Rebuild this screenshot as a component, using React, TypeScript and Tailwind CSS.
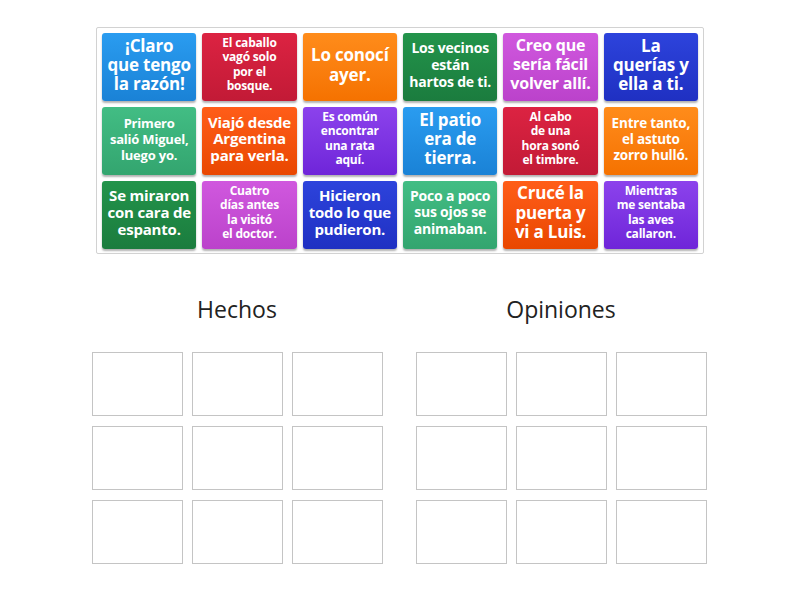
const palette = {
  blue: "bg-gradient-to-b from-[#2a9cf0] to-[#1a82d6]",
  crimson: "bg-gradient-to-b from-[#dc2342] to-[#c21a36]",
  orange: "bg-gradient-to-b from-[#ff8c1a] to-[#f57200]",
  green: "bg-gradient-to-b from-[#23944b] to-[#1b7c3e]",
  orchid: "bg-gradient-to-b from-[#d058de] to-[#bb42cb]",
  navy: "bg-gradient-to-b from-[#2d43dc] to-[#1f30c2]",
  mint: "bg-gradient-to-b from-[#42bd84] to-[#33a56f]",
  red: "bg-gradient-to-b from-[#ff5d18] to-[#e94700]",
  purple: "bg-gradient-to-b from-[#8c42ec] to-[#6f24d9]",
};

type Card = { lines: string[]; color: string; size: string };

const cards: Card[] = [
  { lines: ["¡Claro", "que tengo", "la razón!"], color: palette.blue, size: "text-[17px] leading-[19px]" },
  { lines: ["El caballo", "vagó solo", "por el", "bosque."], color: palette.crimson, size: "text-[12px] leading-[14.5px]" },
  { lines: ["Lo conocí", "ayer."], color: palette.orange, size: "text-[17px] leading-[20px]" },
  { lines: ["Los vecinos", "están", "hartos de ti."], color: palette.green, size: "text-[14px] leading-[17px]" },
  { lines: ["Creo que", "sería fácil", "volver allí."], color: palette.orchid, size: "text-[16px] leading-[19px]" },
  { lines: ["La", "querías y", "ella a ti."], color: palette.navy, size: "text-[17px] leading-[19px]" },

  { lines: ["Primero", "salió Miguel,", "luego yo."], color: palette.mint, size: "text-[13px] leading-[16px]" },
  { lines: ["Viajó desde", "Argentina", "para verla."], color: palette.red, size: "text-[15px] leading-[16.5px]" },
  { lines: ["Es común", "encontrar", "una rata", "aquí."], color: palette.purple, size: "text-[12px] leading-[14.5px]" },
  { lines: ["El patio", "era de", "tierra."], color: palette.blue, size: "text-[17px] leading-[19px]" },
  { lines: ["Al cabo", "de una", "hora sonó", "el timbre."], color: palette.crimson, size: "text-[12px] leading-[14.5px]" },
  { lines: ["Entre tanto,", "el astuto", "zorro hulló."], color: palette.orange, size: "text-[13.5px] leading-[16px]" },

  { lines: ["Se miraron", "con cara de", "espanto."], color: palette.green, size: "text-[15px] leading-[17px]" },
  { lines: ["Cuatro", "días antes", "la visitó", "el doctor."], color: palette.orchid, size: "text-[12px] leading-[14.5px]" },
  { lines: ["Hicieron", "todo lo que", "pudieron."], color: palette.navy, size: "text-[15px] leading-[17px]" },
  { lines: ["Poco a poco", "sus ojos se", "animaban."], color: palette.mint, size: "text-[14px] leading-[16.5px]" },
  { lines: ["Crucé la", "puerta y", "vi a Luis."], color: palette.red, size: "text-[17px] leading-[19.5px]" },
  { lines: ["Mientras", "me sentaba", "las aves", "callaron."], color: palette.purple, size: "text-[12px] leading-[14.5px]" },
];

function DropGroup({ title }: { title: string }) {
  return (
    <div className="flex flex-col items-center">
      <h2 className="text-[23px] leading-[30px] text-[#222]">{title}</h2>
      <div className="mt-[28px] grid grid-cols-3 gap-x-[9px] gap-y-[10px]">
        {Array.from({ length: 9 }).map((_, i) => (
          <div key={i} className="w-[91px] h-[64px] border border-[#c4c4c4] bg-white" />
        ))}
      </div>
    </div>
  );
}

export default function App() {
  return (
    <div className="w-[800px] h-[600px] bg-white pt-[27px] font-['Open_Sans',sans-serif]">
      {/* Card tray */}
      <div className="mx-auto w-[608px] border border-[#d2d2d2] rounded-[2px] px-[5px] pt-[5px] pb-[4px] bg-white">
        <div className="grid grid-cols-6 gap-x-[6px] gap-y-[6px]">
          {cards.map((c, i) => (
            <div
              key={i}
              className={`${c.color} ${c.size} h-[68px] pb-[5px] rounded-[3px] shadow-[0_2px_2px_rgba(0,0,0,0.3)] flex flex-col items-center justify-center text-center text-white font-bold tracking-[-0.2px] whitespace-nowrap`}
            >
              {c.lines.map((l, j) => (
                <span key={j}>{l}</span>
              ))}
            </div>
          ))}
        </div>
      </div>

      {/* Drop zones */}
      <div className="mt-[40px] pr-[2px] flex justify-center gap-[33px]">
        <DropGroup title="Hechos" />
        <DropGroup title="Opiniones" />
      </div>
    </div>
  );
}
